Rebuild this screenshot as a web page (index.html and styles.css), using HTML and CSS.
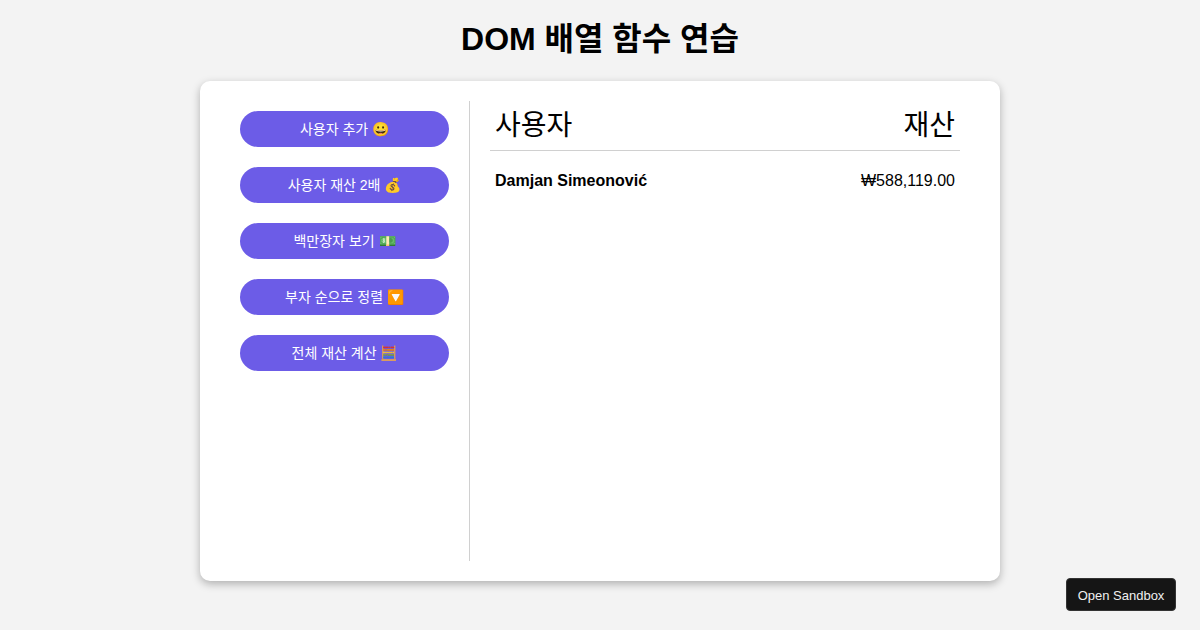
FILE: index.html
```html
<!DOCTYPE html>
<html lang="ko">
<head>
<meta charset="utf-8">
<title>DOM 배열 함수 연습</title>
<link rel="stylesheet" href="styles.css">
</head>
<body>
  <h1 class="title">DOM 배열 함수 연습</h1>
  <div class="container">
    <aside class="sidebar">
      <button class="btn">사용자 추가 😀</button>
      <button class="btn">사용자 재산 2배 💰</button>
      <button class="btn">백만장자 보기 💵</button>
      <button class="btn">부자 순으로 정렬 🔽</button>
      <button class="btn">전체 재산 계산 🧮</button>
    </aside>
    <main class="main">
      <h2 class="head"><span>사용자</span><span>재산</span></h2>
      <div class="person"><strong>Damjan Simeonović</strong><span>₩588,119.00</span></div>
    </main>
  </div>
  <a class="sandbox">Open Sandbox</a>
</body>
</html>
```

FILE: styles.css
```css
* { box-sizing: border-box; }
html, body { margin: 0; padding: 0; }
body {
  background: #f3f3f3;
  font-family: "Liberation Sans", Arial, "Noto Sans CJK KR", sans-serif;
  color: #000;
  display: flex;
  flex-direction: column;
  align-items: center;
  height: 630px;
  overflow: hidden;
}
.title {
  font-size: 32px;
  font-weight: bold;
  line-height: 37px;
  margin: 21px 0 23px;
}
.container {
  width: 800px;
  height: 500px;
  background: #fff;
  border-radius: 10px;
  box-shadow: 0 3px 8px rgba(0, 0, 0, 0.28);
  padding: 20px;
  display: flex;
}
.sidebar {
  width: 250px;
  flex-shrink: 0;
  border-right: 1px solid #d0d0d0;
  padding: 10px 20px;
  display: flex;
  flex-direction: column;
  gap: 20px;
}
.btn {
  display: block;
  width: 100%;
  height: 36px;
  border: none;
  border-radius: 18px;
  background: #6c5ce7;
  color: #fff;
  font-family: "Liberation Sans", Arial, "Noto Sans CJK KR", sans-serif;
  font-size: 14px;
  line-height: 16px;
  padding: 0 10px;
  cursor: pointer;
}
.main {
  flex: 1;
  padding: 0 20px 0 20px;
}
.head {
  display: flex;
  justify-content: space-between;
  margin: 0;
  padding: 10px 5px 10px;
  font-size: 28px;
  font-weight: normal;
  line-height: 29px;
  border-bottom: 1px solid #d0d0d0;
}
.person {
  display: flex;
  justify-content: space-between;
  padding: 21px 5px 10px;
  font-size: 16px;
  line-height: 18px;
}
.person strong { font-weight: bold; }
.sandbox {
  position: fixed;
  right: 24px;
  bottom: 19px;
  width: 110px;
  height: 33px;
  background: #151515;
  color: #f0f0f0;
  border-radius: 4px;
  font-size: 13px;
  line-height: 33px;
  text-align: center;
  border: 1px solid #333;
}
```
